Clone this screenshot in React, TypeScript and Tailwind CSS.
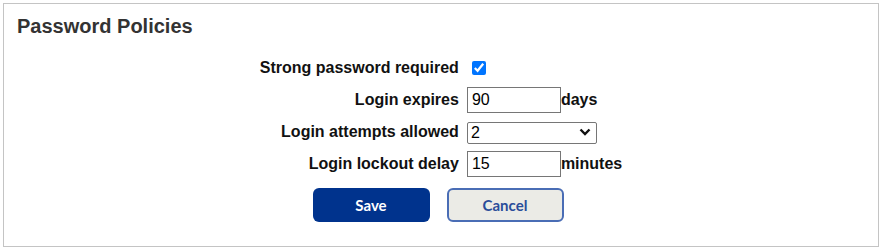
import React from 'react'

function PasswordPolicies() {
    return (
        <div className="p-[3px] bg-white">
            <div className="h-[244px] w-[876px] border border-[#c4c4c4] pl-[13px] pt-[10px] font-['Liberation_Sans',Arial,sans-serif]">
                <h2 className="text-[20px] font-bold leading-[24px] text-[#333333]">Password Policies</h2>

                <div className="mt-[17px] flex justify-center pr-[13px]">
                    <div className="grid grid-cols-[auto_auto] items-center gap-x-[8px] gap-y-[6px] text-[16px] font-bold text-[#111111]">
                        <label className="text-right">Strong password required</label>
                        <div className="flex h-[26px] items-center">
                            <input type="checkbox" defaultChecked className="ml-[5px] h-[14px] w-[14px] accent-[#0075ff]" />
                        </div>

                        <label className="text-right">Login expires</label>
                        <div className="flex h-[26px] items-center">
                            <input
                                type="text"
                                defaultValue="90"
                                className="h-[26px] w-[94px] border border-[#767676] px-[4px] text-[16px] font-normal text-black outline-none"
                            />
                            <span>days</span>
                        </div>

                        <label className="text-right">Login attempts allowed</label>
                        <div className="flex h-[26px] items-center">
                            <div className="relative h-[22px] w-[130px]">
                                <select
                                    defaultValue="2"
                                    className="h-[22px] w-[130px] appearance-none rounded-[2px] border border-[#767676] bg-white px-[3px] text-[16px] leading-[20px] font-normal text-black outline-none"
                                >
                                    <option>1</option>
                                    <option>2</option>
                                    <option>3</option>
                                    <option>5</option>
                                </select>
                                <svg
                                    className="pointer-events-none absolute right-[6px] top-[7px]"
                                    width="12"
                                    height="8"
                                    viewBox="0 0 12 8"
                                    fill="none"
                                >
                                    <path d="M1.5 1.5 L6 6 L10.5 1.5" stroke="#111" strokeWidth="2.4" />
                                </svg>
                            </div>
                        </div>

                        <label className="text-right">Login lockout delay</label>
                        <div className="flex h-[26px] items-center">
                            <input
                                type="text"
                                defaultValue="15"
                                className="h-[26px] w-[94px] border border-[#767676] px-[4px] text-[16px] font-normal text-black outline-none"
                            />
                            <span>minutes</span>
                        </div>
                    </div>
                </div>

                <div className="mt-[11px] flex justify-center gap-[17px] pr-[19px] font-['Lato',sans-serif] text-[15px] font-bold">
                    <button className="h-[34px] w-[117px] rounded-[6px] bg-[#00338d] text-white">Save</button>
                    <button className="h-[34px] w-[117px] rounded-[6px] border-2 border-[#4a6db5] bg-[#ebebe6] text-[#2a4d9a]">Cancel</button>
                </div>
            </div>
        </div>
    )
}

export default function App() {
    return <PasswordPolicies />
}
